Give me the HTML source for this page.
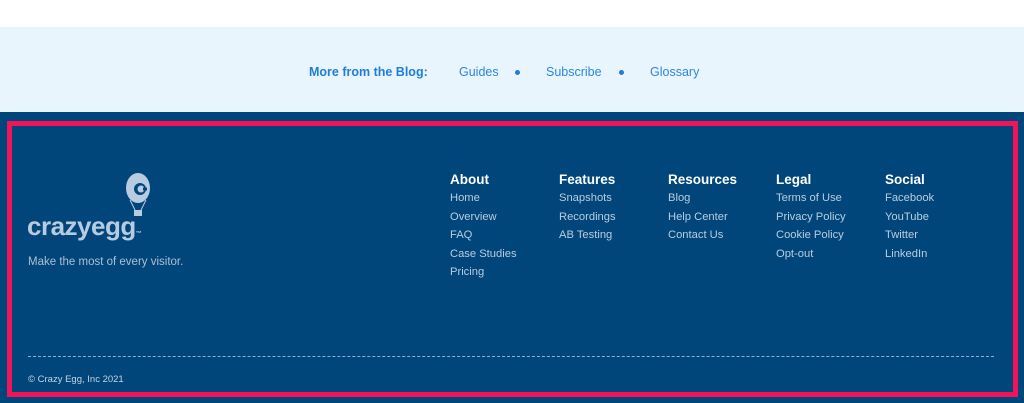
<!DOCTYPE html>
<html><head><style>
*{margin:0;padding:0;box-sizing:border-box}
body{width:1024px;height:403px;overflow:hidden;background:#fff;font-family:"Liberation Sans",sans-serif;position:relative}
.band{position:absolute;top:27px;left:0;width:1024px;height:85px;background:#e9f5fd}
.band span{position:absolute;top:38px;font-size:12.5px;color:#2b87e3}
.band .b{font-weight:bold;left:309px;color:#1f7ddb}
.dot{position:absolute;top:43px;width:5px;height:5px;border-radius:50%;background:#1f7ddb}
.foot{position:absolute;top:112px;left:0;width:1024px;height:291px;background:#00467a}
.red{position:absolute;left:7px;top:121px;width:1011px;height:276px;border:5px solid #f2145a}
.col{position:absolute;top:172px;color:#b8cde0;font-size:11.2px}
.col h4{color:#fff;font-size:13.5px;font-weight:bold;margin-bottom:5px}
.col div{height:18.5px}
.tag{position:absolute;left:28px;top:256px;color:#a9c0d6;font-size:11.5px}
.logo{position:absolute;left:27px;top:211px;color:#b7cce0;font-size:26px;font-weight:bold;letter-spacing:-0.5px}
.dash{position:absolute;left:28px;top:356px;width:966px;border-top:1px dashed #8fb0cc}
.copy{position:absolute;left:28px;top:374px;color:#c3d4e4;font-size:9.5px}
</style></head><body>
<div class="band">
<span class="b">More from the Blog:</span>
<span style="left:459px">Guides</span><i class="dot" style="left:515px"></i>
<span style="left:546px">Subscribe</span><i class="dot" style="left:619px"></i>
<span style="left:650px">Glossary</span>
</div>
<div class="foot"></div>
<div class="red"></div>
<svg style="position:absolute;left:124px;top:172px" width="30" height="46" viewBox="0 0 30 46">
<ellipse cx="14" cy="16" rx="12" ry="15" fill="#b7cce0"/>
<circle cx="16" cy="17" r="6" fill="#00467a"/><circle cx="17" cy="17" r="3.5" fill="#b7cce0"/><rect x="19" y="15.5" width="4" height="3" fill="#00467a"/>
<path d="M6 28 L11 38 M22 28 L17 38" stroke="#b7cce0" stroke-width="1"/>
<rect x="10" y="38" width="8" height="6" fill="#b7cce0"/>
</svg>
<div class="logo">crazyegg<span style="font-size:6px">™</span></div>
<div class="tag">Make the most of every visitor.</div>
<div class="col" style="left:450px"><h4>About</h4><div>Home</div><div>Overview</div><div>FAQ</div><div>Case Studies</div><div>Pricing</div></div>
<div class="col" style="left:559px"><h4>Features</h4><div>Snapshots</div><div>Recordings</div><div>AB Testing</div></div>
<div class="col" style="left:668px"><h4>Resources</h4><div>Blog</div><div>Help Center</div><div>Contact Us</div></div>
<div class="col" style="left:776px"><h4>Legal</h4><div>Terms of Use</div><div>Privacy Policy</div><div>Cookie Policy</div><div>Opt-out</div></div>
<div class="col" style="left:885px"><h4>Social</h4><div>Facebook</div><div>YouTube</div><div>Twitter</div><div>LinkedIn</div></div>
<div class="dash"></div>
<div class="copy">© Crazy Egg, Inc 2021</div>
</body></html>
